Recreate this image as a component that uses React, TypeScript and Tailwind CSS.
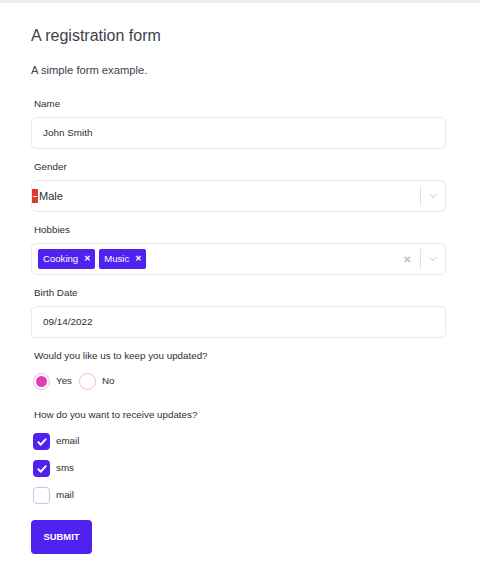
import { useState } from "react";

const font = { fontFamily: "'Liberation Sans', Arial, sans-serif" };

function Label({ children }: { children: React.ReactNode }) {
  return <div className="px-[3px] text-[9.8px] text-[#2a3036] mb-[7px] leading-[12px]">{children}</div>;
}

function Chevron() {
  return (
    <svg width="10" height="10" viewBox="0 0 20 20" className="text-[#c4c4c4]">
      <path d="M4 7l6 6 6-6" fill="none" stroke="currentColor" strokeWidth="2" strokeLinecap="round" strokeLinejoin="round" />
    </svg>
  );
}

export default function App() {
  const [updated, setUpdated] = useState("yes");
  const [channels, setChannels] = useState({ email: true, sms: true, mail: false });

  return (
    <div className="min-h-[561px] bg-white" style={font}>
      <div className="h-[3px] bg-[#ededed]" />
      <div className="px-[31px] pt-[23px] w-[415px] box-content">
        <h1 className="text-[16px] text-[#3b4249] leading-[20px]">A registration form</h1>
        <p className="text-[11.2px] text-[#3b4249] mt-[17px] leading-[14px]">A simple form example.</p>

        {/* Name */}
        <div className="mt-[21px]">
          <Label>Name</Label>
          <div className="h-[32px] rounded-[5px] border border-[#e8e8e8] flex items-center px-[11px] text-[9.9px] text-[#2a3036]">
            John Smith
          </div>
        </div>

        {/* Gender */}
        <div className="mt-[12px]">
          <Label>Gender</Label>
          <div className="h-[32px] rounded-[5px] border border-[#e8e8e8] flex items-center">
            <div className="flex-1 flex items-center text-[11px] text-[#2a3036]">
              <span className="w-[6px] h-[14px] bg-[#dc3b32] rounded-r-[1px] flex items-center justify-center mr-[1px]">
                <span className="w-[4px] h-[1px] bg-white" />
              </span>
              Male
            </div>
            <div className="w-px h-[20px] bg-[#e0e0e0]" />
            <div className="w-[24px] flex justify-center"><Chevron /></div>
          </div>
        </div>

        {/* Hobbies */}
        <div className="mt-[12px]">
          <Label>Hobbies</Label>
          <div className="h-[32px] rounded-[5px] border border-[#e8e8e8] flex items-center">
            <div className="flex-1 flex items-center gap-[4px] pl-[6px]">
              {["Cooking", "Music"].map((t) => (
                <span key={t} className="h-[20px] bg-[#4f22ef] rounded-[2px] flex items-center pl-[5px] pr-[4px] text-[9.6px] text-white gap-[6px]">
                  {t}
                  <span className="text-[8px] font-bold">✕</span>
                </span>
              ))}
            </div>
            <span className="text-[#bdbdbd] text-[10px] font-bold mr-[9px]">✕</span>
            <div className="w-px h-[20px] bg-[#e0e0e0]" />
            <div className="w-[24px] flex justify-center"><Chevron /></div>
          </div>
        </div>

        {/* Birth date */}
        <div className="mt-[12px]">
          <Label>Birth Date</Label>
          <div className="h-[32px] rounded-[5px] border border-[#e8e8e8] flex items-center px-[11px] text-[9.9px] text-[#2a3036]">
            09/14/2022
          </div>
        </div>

        {/* Radio */}
        <div className="mt-[12px]">
          <Label>Would you like us to keep you updated?</Label>
          <div className="flex items-center mt-[11px] px-[2px]">
            {[
              ["yes", "Yes"],
              ["no", "No"],
            ].map(([v, l]) => (
              <label key={v} className="flex items-center gap-[6px] text-[9.8px] text-[#2a3036] mr-[7px]" onClick={() => setUpdated(v)}>
                <span className="w-[17px] h-[17px] rounded-full border border-[#f2b6df] flex items-center justify-center">
                  {updated === v && <span className="w-[11px] h-[11px] rounded-full bg-[#e23db8]" />}
                </span>
                {l}
              </label>
            ))}
          </div>
        </div>

        {/* Checkboxes */}
        <div className="mt-[19px]">
          <Label>How do you want to receive updates?</Label>
          <div className="flex flex-col gap-[10px] mt-[12px] px-[2px]">
            {(["email", "sms", "mail"] as const).map((k) => (
              <label key={k} className="flex items-center gap-[6px] text-[9.8px] text-[#2a3036]" onClick={() => setChannels({ ...channels, [k]: !channels[k] })}>
                <span
                  className={
                    channels[k]
                      ? "w-[17px] h-[17px] rounded-[4px] bg-[#4f22ef] flex items-center justify-center"
                      : "w-[17px] h-[17px] rounded-[4px] border border-[#c9c0f7] bg-white"
                  }
                >
                  {channels[k] && (
                    <svg width="12" height="12" viewBox="0 0 20 20">
                      <path d="M4 10.5l4 4 8-9" fill="none" stroke="white" strokeWidth="3.2" strokeLinecap="round" strokeLinejoin="round" />
                    </svg>
                  )}
                </span>
                {k}
              </label>
            ))}
          </div>
        </div>

        <button className="mt-[16px] h-[34px] w-[61px] rounded-[4px] bg-[#4f22ef] text-white text-[9.4px] font-bold">
          SUBMIT
        </button>
      </div>
    </div>
  );
}
